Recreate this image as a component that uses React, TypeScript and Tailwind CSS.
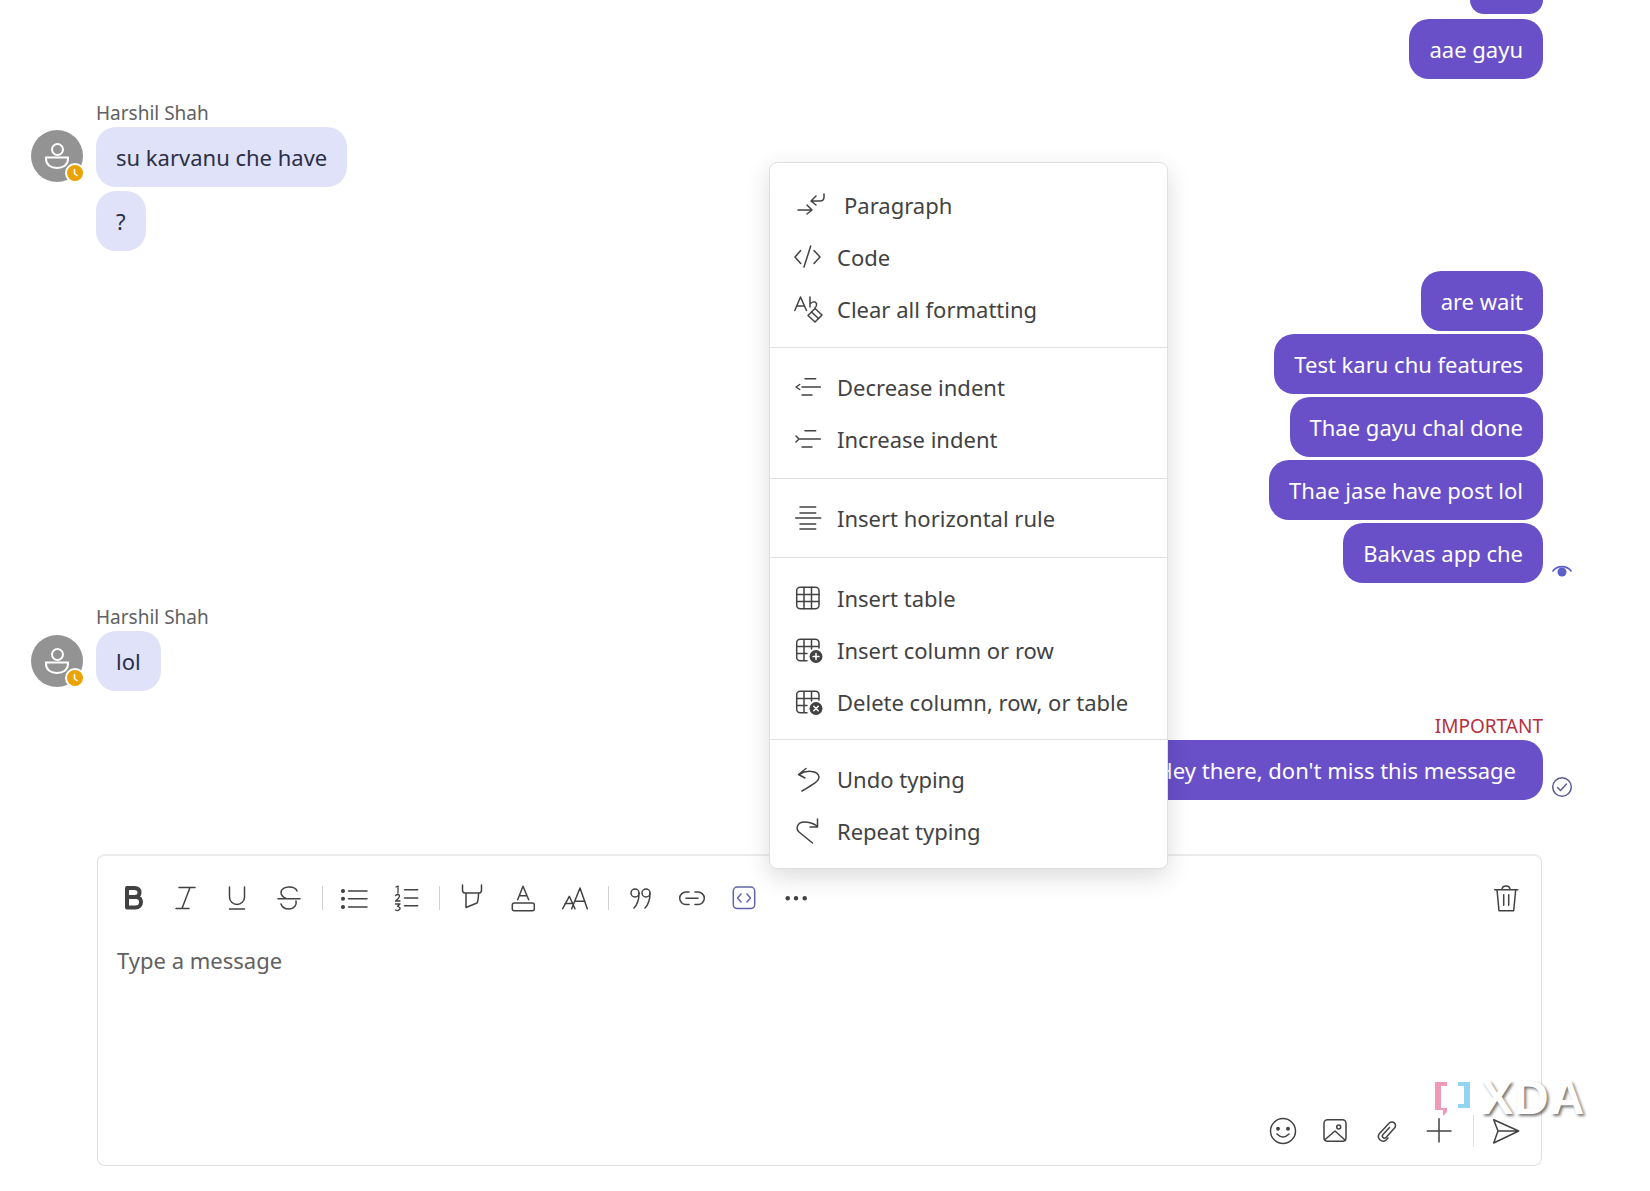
import React from "react";

const FONT = "font-['Noto_Sans','Open_Sans',sans-serif]";

type IconProps = { children: React.ReactNode; color?: string; width?: number };

const Ic = ({ children, color = "#424242", width = 1.5 }: IconProps) => (
  <svg
    width="28"
    height="28"
    viewBox="0 0 28 28"
    fill="none"
    stroke={color}
    strokeWidth={width}
    strokeLinecap="round"
    strokeLinejoin="round"
    className="shrink-0 overflow-visible"
  >
    {children}
  </svg>
);

const toolbarLeft: (React.ReactNode | "sep")[] = [
  <Ic width={4}><path d="M8 4H15.5C19 4 20.5 6 20.5 8.5C20.5 11 19 13 15.5 13H8ZM8 13H17C20.5 13 22 15.5 22 18C22 21 20 23.5 16.5 23.5H8Z" /></Ic>,
  <Ic><path d="M8 3.5H24M5 24.5H18M19 3.5L11 24.5" /></Ic>,
  <Ic><path d="M6.5 3V13a7.5 7.5 0 0 0 15 0V3M6.5 25H21.5" /></Ic>,
  <Ic><path d="M3 14.7H25M22 7C21 4 18 3 14 3C10 3 6 5 6 8.5C6 11 8 13 11 14.5M21 17C22 21 19 25 14 25C10 25 7 23 6 20" /></Ic>,
  "sep",
  <Ic><path d="M8.5 7H27M8.5 14.7H27M8.5 23H27" /><circle cx="3" cy="7" r="1.3" fill="#424242" /><circle cx="3" cy="14.7" r="1.3" fill="#424242" /><circle cx="3" cy="23" r="1.3" fill="#424242" /></Ic>,
  <Ic><path d="M12.5 5.7H25.7M12.5 14H25.7M12.5 21.7H25.7" /><path d="M4 3L6 2V9M3.5 11.5Q6 9.5 7.5 11.5Q7.5 14 3.5 17H8M3.5 20H8L5.5 22.3Q8.5 23 8 25Q6 27.5 3.5 26" strokeWidth="1.3" /></Ic>,
  "sep",
  <Ic><path d="M5.5 1V6Q5.5 9 8 9H22Q24.5 9 24.5 6V1M9 9V23.5L20 19Q21.5 16 21.5 9" /></Ic>,
  <Ic><path d="M8.7 15.7L14 2.3L19.7 15.7M10.2 11.7H18" /><rect x="3.3" y="19" width="22" height="7.7" rx="2" /></Ic>,
  <Ic><path d="M1.7 24.7L8.3 12.3L14 24.7M4 19.5H12M10.7 24.7L19 4L26.3 24.7M14 17.3H24" /></Ic>,
  "sep",
  <Ic><circle cx="9" cy="9" r="4" /><path d="M13 9Q13 19 8 24" /><circle cx="20" cy="9" r="4" /><path d="M24 9Q24 19 19 24" /></Ic>,
  <Ic><path d="M11 8H8a6.3 6.3 0 0 0 0 12.6H11M17 8H20a6.3 6.3 0 0 1 0 12.6H17M8 14.3H20" /></Ic>,
  <Ic color="#6264a7"><rect x="3.3" y="3" width="21.4" height="21.6" rx="4" /><path d="M11 10L7.5 14L11 18M17 10L20.5 14L17 18" /></Ic>,
  <Ic><circle cx="5.7" cy="14.3" r="1.5" fill="#424242" /><circle cx="14" cy="14.3" r="1.5" fill="#424242" /><circle cx="22.7" cy="14.3" r="1.5" fill="#424242" /></Ic>,
];

const tableGrid = (
  <path d="M25 12V6.8A3.5 3.5 0 0 0 21.5 3.3H6.2A3.5 3.5 0 0 0 2.7 6.8V21.2A3.5 3.5 0 0 0 6.2 24.7H13M10 3.3V24.7M17.5 3.3V13M2.7 10.5H25M2.7 17.5H13" />
);

const menuSections: { cls: string; rows: { label: string; icon: React.ReactNode; pad?: string }[] }[] = [
  {
    cls: "pt-[16px] pb-[12px]",
    rows: [
      { label: "Paragraph", pad: "ml-[22px]", icon: <Ic><path d="M4 19H18M13 14L18 19L13 23M30 3V6Q30 10 26 10H18M22 5L17 10L22 14" /></Ic> },
      { label: "Code", icon: <Ic><path d="M6.7 7.5L1 14L6.7 20.5M16.7 3L10 24M20 7.5L26 14L20 20.5" /></Ic> },
      { label: "Clear all formatting", icon: <Ic><path d="M0.8 15.5L6.5 2L12.5 15.5M2.8 11H10.5M16 2V12M16 9Q20 5 22.5 8.5Q23 11 21 13" /><path d="M14 20.5L21 13.5L28 20L21 27Z" fill="#fff" /><path d="M17.5 17L24.5 23.5" /></Ic> },
    ],
  },
  {
    cls: "py-[13px]",
    rows: [
      { label: "Decrease indent", icon: <Ic><path d="M11 5.7H21.7M8 14H26.3M8 22H18M5.7 11.5L2 14L5.7 16.5" /></Ic> },
      { label: "Increase indent", icon: <Ic><path d="M11 5.7H21.7M6 14H26.3M8 22H18M2 11L5 14L2 17" /></Ic> },
    ],
  },
  {
    cls: "py-[13px]",
    rows: [
      { label: "Insert horizontal rule", icon: <Ic><path d="M6 3H21.7M6 9H21.7M1.7 14H26.7M6 20H21.7M6 25H21.7" /></Ic> },
    ],
  },
  {
    cls: "pt-[14px] pb-[11px]",
    rows: [
      { label: "Insert table", icon: <Ic><rect x="2.7" y="3.3" width="22.3" height="21.4" rx="3.5" /><path d="M10 3.3V24.7M17.5 3.3V24.7M2.7 10.5H25M2.7 17.5H25" /></Ic> },
      { label: "Insert column or row", icon: <Ic>{tableGrid}<circle cx="22" cy="20.5" r="6.5" fill="#424242" stroke="none" /><path d="M22 17.5V23.5M19 20.5H25" stroke="#fff" /></Ic> },
      { label: "Delete column, row, or table", icon: <Ic>{tableGrid}<circle cx="22" cy="20.5" r="6.5" fill="#424242" stroke="none" /><path d="M19.8 18.3L24.2 22.7M24.2 18.3L19.8 22.7" stroke="#fff" /></Ic> },
    ],
  },
  {
    cls: "pt-[13px] pb-[11px]",
    rows: [
      { label: "Undo typing", icon: <Ic><path d="M12 3.5L4.5 9.5L11 13M5 9.5C12 5 24 5 25 12C25 16 20 19 8 26" /></Ic> },
      { label: "Repeat typing", icon: <Ic><path d="M18.5 26L5 15C1 11 4 5 10 5C14 5 19 6 23 9M23.5 2V10H16" /></Ic> },
    ],
  },
];

const bubbleIn = "h-[60px] flex items-center px-[20px] rounded-[20px] bg-[#dfe2f9] text-[#2b2f47] text-[22px] whitespace-nowrap";
const bubbleOut = "h-[60px] flex items-center px-[20px] rounded-[20px] bg-[#6950c9] text-white text-[22px] whitespace-nowrap";

const Avatar = ({ top }: { top: string }) => (
  <div className={`relative w-[52px] h-[52px] rounded-full bg-[#939393] shrink-0 ${top}`}>
    <svg width="52" height="52" viewBox="0 0 52 52" fill="none" stroke="#fff" strokeWidth="2">
      <circle cx="26.5" cy="19.5" r="5.5" />
      <path d="M15 27.5H37V29C37 35 32 38 26 38C20 38 15 35 15 29Z" />
    </svg>
    <div className="absolute left-[34px] top-[33px] w-[20px] h-[20px] rounded-full bg-[#eaa300] border-2 border-white flex items-center justify-center">
      <svg width="12" height="12" viewBox="0 0 12 12" fill="none" stroke="#fff" strokeWidth="1.6" strokeLinecap="round">
        <path d="M5.5 2.5V6.5L8 8.5" />
      </svg>
    </div>
  </div>
);

const Name = ({ children }: { children: string }) => (
  <div className="h-[26px] leading-[24px] text-[19px] text-[#616161] whitespace-nowrap">{children}</div>
);

const outgoing = ["are wait", "Test karu chu features", "Thae gayu chal done", "Thae jase have post lol", "Bakvas app che"];

export default function App() {
  return (
    <div className={`relative w-[1650px] h-[1191px] overflow-hidden bg-white ${FONT}`}>
      <div className="flex flex-col">
        <div className="self-end mr-[107px] w-[73px] h-[14px] rounded-b-[16px] bg-[#6950c9]" />
        <div className={`self-end mr-[107px] mt-[5px] ${bubbleOut}`}>aae gayu</div>

        <div className="flex gap-[13px] pl-[31px] mt-[22px]">
          <Avatar top="mt-[29px]" />
          <div className="flex flex-col items-start">
            <Name>Harshil Shah</Name>
            <div className={bubbleIn}>su karvanu che have</div>
            <div className={`mt-[4px] ${bubbleIn}`}>?</div>
          </div>
        </div>

        <div className="self-end mr-[107px] mt-[20px] flex flex-col items-end gap-[3px]">
          {outgoing.map((text, i) => (
            <div key={text} className={`relative ${bubbleOut}`}>
              {text}
              {i === outgoing.length - 1 && (
                <svg width="24" height="24" viewBox="0 0 24 24" fill="none" className="absolute left-full ml-[7px] top-[36px]">
                  <path d="M2.5 12.5C7 6 17 6 21.5 12.5" stroke="#5b5fc7" strokeWidth="1.6" />
                  <circle cx="12" cy="13" r="4.5" fill="#5b5fc7" />
                </svg>
              )}
            </div>
          ))}
        </div>

        <div className="flex gap-[13px] pl-[31px] mt-[22px]">
          <Avatar top="mt-[30px]" />
          <div className="flex flex-col items-start">
            <Name>Harshil Shah</Name>
            <div className={bubbleIn}>lol</div>
          </div>
        </div>

        <div className="self-end mr-[107px] mt-[24px] h-[25px] leading-[22px] text-[19px] text-[#b5303f]">IMPORTANT</div>
        <div className={`self-end mr-[107px] relative pr-[27px]! ${bubbleOut}`}>
          Hey there, don't miss this message
          <svg width="24" height="24" viewBox="0 0 24 24" fill="none" stroke="#5c5c94" strokeWidth="1.5" strokeLinecap="round" strokeLinejoin="round" className="absolute left-full ml-[7px] top-[35px]">
            <circle cx="12" cy="12" r="9.3" />
            <path d="M7.5 12.5L10.5 15.5L16.5 9" />
          </svg>
        </div>

        {/* compose box */}
        <div className="ml-[97px] mt-[54px] w-[1445px] h-[312px] rounded-[8px] border border-[#e0e0e0] border-t-2 border-t-[#ececec] flex flex-col">
          <div className="flex items-center justify-between pt-[16px] pl-[9px] pr-[9px]">
            <div className="flex items-center">
              {toolbarLeft.map((item, i) =>
                item === "sep" ? (
                  <div key={i} className="w-px h-[24px] ml-[7px] mr-[5px] bg-[#d1d1d1]" />
                ) : (
                  <div key={i} className="w-[52px] h-[52px] flex items-center justify-center">{item}</div>
                )
              )}
            </div>
            <div className="w-[52px] h-[52px] flex items-center justify-center">
              <Ic><path d="M2.7 5.7H25.7M10 5.7C10 3 11.5 2 14 2C16.5 2 18 3 18 5.7M5 5.7L7 26.7H21.7L23.7 5.7M11.7 10.7V21.3M16.7 10.7V21.3" /></Ic>
            </div>
          </div>
          <div className="pl-[19px] mt-[21px] text-[22px] leading-[30px] text-[#616161]">Type a message</div>
          <div className="mt-auto flex items-center justify-end pr-[9px] pb-[8px]">
            <div className="w-[52px] h-[52px] flex items-center justify-center">
              <Ic><circle cx="14" cy="14" r="12.5" /><circle cx="9" cy="11.7" r="1.2" fill="#424242" /><circle cx="19" cy="11.7" r="1.2" fill="#424242" /><path d="M8 17Q14 23 20 17" /></Ic>
            </div>
            <div className="w-[52px] h-[52px] flex items-center justify-center">
              <Ic><rect x="3" y="2.7" width="22" height="21.6" rx="3.5" /><circle cx="17.7" cy="10" r="2" /><path d="M3.5 23L14 14L24.5 23.5" /></Ic>
            </div>
            <div className="w-[52px] h-[52px] flex items-center justify-center">
              <Ic><path d="M16.5 10.5L10 17.5a2 2 0 0 0 3 3L21.5 11a3.6 3.6 0 0 0 -5.2 -5L6.5 16.5a4.7 4.7 0 0 0 6.6 6.6L15 21" /></Ic>
            </div>
            <div className="w-[52px] h-[52px] flex items-center justify-center">
              <Ic><path d="M14 1.7V25M2.3 14H26" /></Ic>
            </div>
            <div className="w-px h-[32px] ml-[8px] mr-[6px] bg-[#e0e0e0]" />
            <div className="w-[52px] h-[52px] flex items-center justify-center">
              <Ic><path d="M1.7 2.7L26.7 14L1.7 26L6 14ZM6 14H26.7" /></Ic>
            </div>
          </div>
        </div>
      </div>

      {/* formatting menu */}
      <div className="absolute left-[769px] top-[162px] w-[399px] h-[707px] rounded-[8px] bg-white border border-[#e0e0e0] shadow-[0_8px_24px_rgba(0,0,0,0.14)] divide-y divide-[#e0e0e0] text-[22px] text-[#424242]">
        {menuSections.map((section) => (
          <div key={section.rows[0].label} className={section.cls}>
            {section.rows.map((row) => (
              <div key={row.label} className="h-[52px] flex items-center pl-[24px] whitespace-nowrap">
                {row.icon}
                <span className={row.pad ?? "ml-[15px]"}>{row.label}</span>
              </div>
            ))}
          </div>
        ))}
      </div>

      {/* site watermark */}
      <div className="absolute left-[1432px] top-[1072px] flex items-center gap-[3px]">
        <svg width="46" height="52" viewBox="0 0 46 52" fill="none">
          <path d="M15 10H3V38H11V44L15 40V36H9V14H15Z" fill="#ee9ab8" />
          <path d="M26 10H38V36H26V32H32V14H26Z" fill="#93d4f2" />
        </svg>
        <span className="font-['Liberation_Sans'] font-bold text-[48px] leading-[52px] tracking-[1px] text-white [text-shadow:2px_2px_3px_rgba(0,0,0,0.55)]">XDA</span>
      </div>
    </div>
  );
}
